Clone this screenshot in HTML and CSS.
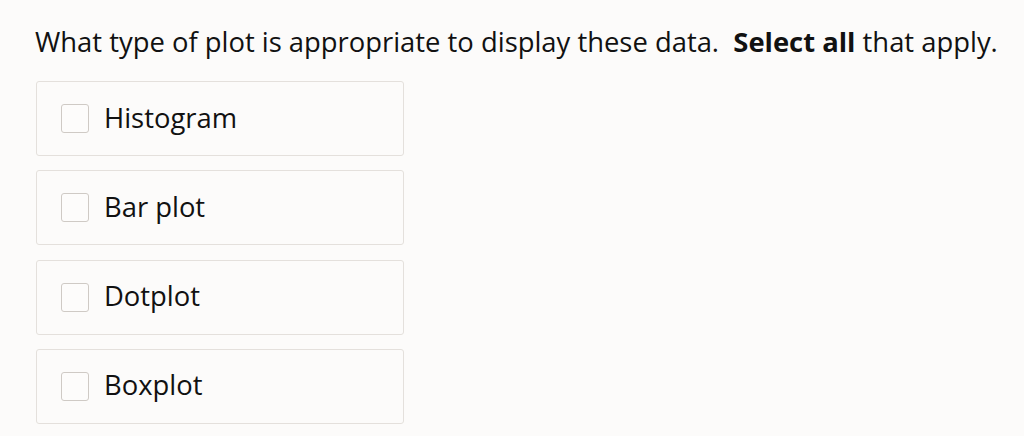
FILE: index.html
```html
<!DOCTYPE html>
<html>
<head>
<meta charset="utf-8">
<link rel="stylesheet" href="styles.css">
</head>
<body>
<div class="question">
  <p class="prompt">What type of plot is appropriate to display these data.&nbsp; <strong>Select all</strong> that apply.</p>
  <div class="options">
    <label class="option"><span class="box"></span><span class="text">Histogram</span></label>
    <label class="option"><span class="box"></span><span class="text">Bar plot</span></label>
    <label class="option"><span class="box"></span><span class="text">Dotplot</span></label>
    <label class="option"><span class="box"></span><span class="text">Boxplot</span></label>
  </div>
</div>
</body>
</html>
```
FILE: styles.css
```css
html, body {
  margin: 0;
  padding: 0;
  background: #fcfbfa;
}
body {
  font-family: "Open Sans", "Liberation Sans", sans-serif;
  color: #111;
}
.question {
  padding: 23px 0 0 35px;
}
.prompt {
  margin: 0;
  font-size: 27.4px;
  line-height: 38px;
  white-space: nowrap;
}
.prompt strong {
  font-weight: 700;
}
.options {
  margin-top: 20px;
  margin-left: 1px;
  display: flex;
  flex-direction: column;
  gap: 14.3px;
  width: 368px;
}
.option {
  box-sizing: border-box;
  height: 75px;
  border: 1px solid #e4e0dc;
  border-radius: 3px;
  display: flex;
  align-items: center;
  padding-left: 24px;
  gap: 15px;
  font-size: 27.4px;
}
.text {
  position: relative;
  top: -1.5px;
}
.box {
  box-sizing: border-box;
  width: 28px;
  height: 29px;
  border: 1.5px solid #cfcac5;
  border-radius: 3px;
  background: #fdfcfb;
  flex: none;
}
```
